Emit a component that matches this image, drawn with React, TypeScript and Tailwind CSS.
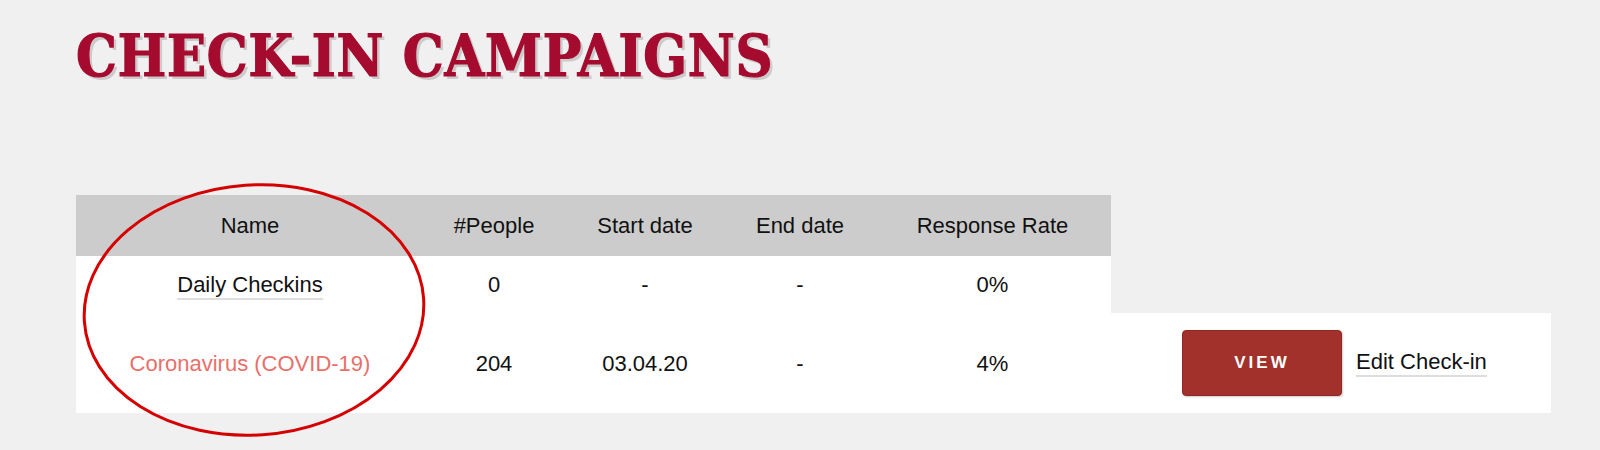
const rows = [
  { name: "Daily Checkins", people: "0", start: "-", end: "-", rate: "0%", active: false },
  { name: "Coronavirus (COVID-19)", people: "204", start: "03.04.20", end: "-", rate: "4%", active: true },
];

const cols = ["w-[348px]", "w-[140px]", "w-[162px]", "w-[148px]", "w-[237px]"];

export default function App() {
  return (
    <div className="relative min-h-[450px] bg-[#f0f0f0] pl-[76px] pt-[23px] font-['Liberation_Sans',Arial,sans-serif] text-[#111]">
      <h1 className="font-['DejaVu_Serif_Condensed','DejaVu_Serif',serif] text-[57px] font-bold leading-[66px] tracking-[0.8px] text-[#a50b2e] [-webkit-text-stroke:1.2px_#a50b2e] [text-shadow:3px_3px_0_#cbcbcb]">
        CHECK-IN CAMPAIGNS
      </h1>

      <table className="mt-[106px] border-collapse text-[22px]">
        <thead>
          <tr className="h-[61px]">
            {["Name", "#People", "Start date", "End date", "Response Rate"].map((h, i) => (
              <th key={h} className={`${cols[i]} bg-[#cccccc] text-center font-normal`}>
                {h}
              </th>
            ))}
            <th className="w-[440px]" />
          </tr>
        </thead>
        <tbody>
          {rows.map((r) => (
            <tr key={r.name} className={r.active ? "h-[100px] bg-white" : "h-[57px]"}>
              <td className="bg-white text-center">
                {r.active ? (
                  <span className="text-[#e8706a]">{r.name}</span>
                ) : (
                  <span className="border-b-2 border-[#dddddd] pb-[1px]">{r.name}</span>
                )}
              </td>
              <td className="bg-white text-center">{r.people}</td>
              <td className="bg-white text-center">{r.start}</td>
              <td className="bg-white text-center">{r.end}</td>
              <td className="bg-white text-center">{r.rate}</td>
              <td>
                {r.active && (
                  <div className="flex items-center gap-[14px] pl-[71px]">
                    <button className="h-[66px] w-[160px] rounded-[4px] border border-[#8f2723] bg-[#a3312b] text-[17px] font-bold tracking-[3px] text-white shadow-[1px_1px_2px_rgba(0,0,0,0.2)]">
                      VIEW
                    </button>
                    <span className="border-b-2 border-[#dddddd] leading-[26px]">Edit Check-in</span>
                  </div>
                )}
              </td>
            </tr>
          ))}
        </tbody>
      </table>

      <svg
        className="pointer-events-none absolute left-[78px] top-[180px]"
        width="352"
        height="262"
        viewBox="0 0 352 262"
      >
        <ellipse cx="176" cy="130" rx="170" ry="125" fill="none" stroke="#d50000" strokeWidth="3" transform="rotate(-4 176 130)" />
      </svg>
    </div>
  );
}
